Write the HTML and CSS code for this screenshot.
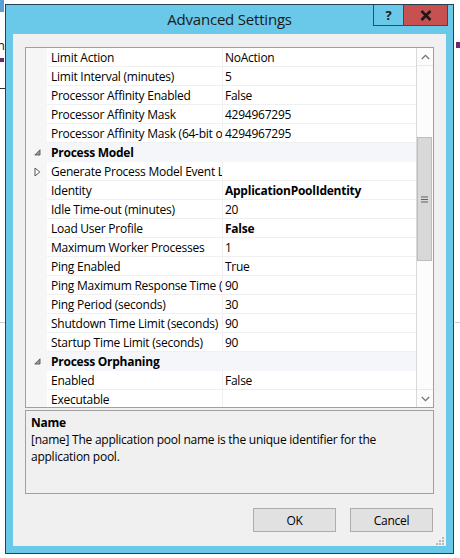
FILE: index.html
```html
<!DOCTYPE html>
<html>
<head>
<meta charset="utf-8">
<title>Advanced Settings</title>
<link rel="stylesheet" href="styles.css">
</head>
<body>
<div class="backdrop">
  <span class="bd-sel"></span>
  <span class="bd-top">Pools</span>
  <span class="bd-left-n">n</span>
  <span class="bd-left-c"></span>
  <span class="bd-left-dash"></span>
  <span class="bd-right-h"></span>
  <span class="bd-line-l"></span>
  <span class="bd-line-r"></span>
</div>

<div class="dialog">
  <div class="titlebar">
    <span class="title">Advanced Settings</span>
    <div class="caption-buttons">
      <div class="cap help">?</div>
      <div class="cap close">
        <svg width="12" height="11" viewBox="0 0 12 11"><path d="M1.5 1 L10.5 10 M10.5 1 L1.5 10" stroke="#1a1a1a" stroke-width="2.6" fill="none"/></svg>
      </div>
    </div>
  </div>

  <div class="client">
    <div class="grid">
      <div class="rows">
        <div class="row"><span class="margin"></span><span class="name">Limit Action</span><span class="value">NoAction</span></div>
        <div class="row"><span class="margin"></span><span class="name">Limit Interval (minutes)</span><span class="value">5</span></div>
        <div class="row"><span class="margin"></span><span class="name">Processor Affinity Enabled</span><span class="value">False</span></div>
        <div class="row"><span class="margin"></span><span class="name">Processor Affinity Mask</span><span class="value">4294967295</span></div>
        <div class="row"><span class="margin"></span><span class="name">Processor Affinity Mask (64-bit option)</span><span class="value">4294967295</span></div>
        <div class="row category"><span class="margin"><svg class="glyph" width="7" height="7" viewBox="0 0 7 7"><path d="M6 0.8 L6 6 L0.8 6 Z" fill="#9a9a9a" stroke="#555" stroke-width="0.9"/></svg></span><span class="cat-name">Process Model</span></div>
        <div class="row"><span class="margin"><svg class="glyph" width="7" height="10" viewBox="0 0 7 10"><path d="M1 1 L5.8 5 L1 9 Z" fill="#fff" stroke="#555" stroke-width="1"/></svg></span><span class="name">Generate Process Model Event Log Entry</span><span class="value"></span></div>
        <div class="row"><span class="margin"></span><span class="name">Identity</span><span class="value bold">ApplicationPoolIdentity</span></div>
        <div class="row"><span class="margin"></span><span class="name">Idle Time-out (minutes)</span><span class="value">20</span></div>
        <div class="row"><span class="margin"></span><span class="name">Load User Profile</span><span class="value bold">False</span></div>
        <div class="row"><span class="margin"></span><span class="name">Maximum Worker Processes</span><span class="value">1</span></div>
        <div class="row"><span class="margin"></span><span class="name">Ping Enabled</span><span class="value">True</span></div>
        <div class="row"><span class="margin"></span><span class="name">Ping Maximum Response Time (seconds)</span><span class="value">90</span></div>
        <div class="row"><span class="margin"></span><span class="name">Ping Period (seconds)</span><span class="value">30</span></div>
        <div class="row"><span class="margin"></span><span class="name">Shutdown Time Limit (seconds)</span><span class="value">90</span></div>
        <div class="row"><span class="margin"></span><span class="name">Startup Time Limit (seconds)</span><span class="value">90</span></div>
        <div class="row category"><span class="margin"><svg class="glyph" width="7" height="7" viewBox="0 0 7 7"><path d="M6 0.8 L6 6 L0.8 6 Z" fill="#9a9a9a" stroke="#555" stroke-width="0.9"/></svg></span><span class="cat-name">Process Orphaning</span></div>
        <div class="row"><span class="margin"></span><span class="name">Enabled</span><span class="value">False</span></div>
        <div class="row"><span class="margin"></span><span class="name">Executable</span><span class="value"></span></div>
      </div>
      <div class="scrollbar">
        <div class="sb-btn">
          <svg width="9" height="6" viewBox="0 0 9 6"><path d="M0.8 5 L4.5 1.3 L8.2 5" stroke="#707070" stroke-width="1.2" fill="none"/></svg>
        </div>
        <div class="sb-track">
          <div class="thumb">
            <svg width="7" height="7" viewBox="0 0 7 7"><path d="M0 1 H7 M0 3.5 H7 M0 6 H7" stroke="#606060" stroke-width="1"/></svg>
          </div>
        </div>
        <div class="sb-btn">
          <svg width="9" height="6" viewBox="0 0 9 6"><path d="M0.8 1 L4.5 4.7 L8.2 1" stroke="#707070" stroke-width="1.2" fill="none"/></svg>
        </div>
      </div>
    </div>

    <div class="desc">
      <div class="desc-title">Name</div>
      <div class="desc-text">[name] The application pool name is the unique identifier for the<br>application pool.</div>
    </div>

    <div class="actions">
      <div class="btn">OK</div>
      <div class="btn">Cancel</div>
    </div>

    <svg class="grip" width="8" height="8" viewBox="0 0 8 8">
      <g fill="#b8b8b8">
        <rect x="6" y="0" width="2" height="2"/>
        <rect x="3" y="3" width="2" height="2"/><rect x="6" y="3" width="2" height="2"/>
        <rect x="0" y="6" width="2" height="2"/><rect x="3" y="6" width="2" height="2"/><rect x="6" y="6" width="2" height="2"/>
      </g>
    </svg>
  </div>
</div>
</body>
</html>
```

FILE: styles.css
```css
* { box-sizing: border-box; }

html, body {
  margin: 0;
  padding: 0;
  width: 460px;
  height: 558px;
  overflow: hidden;
  background: #ffffff;
  font-family: "Open Sans", "Noto Sans", "DejaVu Sans", sans-serif;
  font-size: 12px;
  color: #000;
}

body { position: relative; }

/* fragments of the window behind the dialog */
.backdrop { position: absolute; inset: 0; }
.bd-sel { position: absolute; left: 0; top: 0; width: 4px; height: 12px; background: #5c9fd6; }
.bd-top { position: absolute; left: 30px; top: -15px; font-size: 14px; line-height: 19px; color: #222; }
.bd-left-n { position: absolute; left: -3px; top: 36px; font-size: 13px; color: #222; }
.bd-left-c { position: absolute; left: 0; top: 58px; width: 4px; height: 4px; background: #6b2a6b; }
.bd-left-dash { position: absolute; left: 0; top: 88px; width: 5px; height: 1px; background: #333; }
.bd-right-h { position: absolute; left: 456px; top: 42px; width: 4px; height: 6px; background: #6b2a6b; }
.bd-line-l { position: absolute; left: 0; top: 322px; width: 5px; height: 1px; background: #cfcfcf; }
.bd-line-r { position: absolute; left: 455px; top: 322px; width: 5px; height: 1px; background: #cfcfcf; }

/* dialog frame */
.dialog {
  position: relative;
  margin: 4px 0 0 5px;
  width: 449px;
  height: 550px;
  border: 1px solid #25404f;
  background: #6ac8e8;
  padding: 0 7px 7px 7px;
  display: flex;
  flex-direction: column;
}

.titlebar {
  position: relative;
  height: 29px;
  display: flex;
  align-items: center;
  justify-content: center;
}

.title {
  font-size: 15px;
  color: #1b1b1b;
  letter-spacing: -0.2px;
  margin-top: -1px;
}

.caption-buttons {
  position: absolute;
  top: 0;
  right: -2px;
  display: flex;
}

.cap {
  height: 21px;
  display: flex;
  align-items: center;
  justify-content: center;
  border: 1px solid #2f4f60;
  border-top: none;
}

.help {
  width: 30px;
  font-weight: 700;
  font-size: 13px;
  color: #1a1a1a;
  border-right: none;
}

.close {
  width: 45px;
  background: #c75050;
}

/* client area */
.client {
  position: relative;
  flex: 1;
  background: #f0f0f0;
  padding: 13px 12px 0 12px;
  display: flex;
  flex-direction: column;
  letter-spacing: -0.25px;
}

.grid {
  height: 361px;
  border: 1px solid #a0a0a0;
  background: #fff;
  display: flex;
}

.rows {
  flex: 1;
  overflow: hidden;
}

.row {
  display: flex;
  height: 19px;
  line-height: 17px;
}

.margin {
  width: 21px;
  flex: none;
  background: #f6f6f6;
  display: flex;
  align-items: center;
  justify-content: center;
}

.glyph { margin-left: 1px; }

.name {
  width: 176px;
  flex: none;
  padding: 1px 0 0 4px;
  border-right: 1px solid #f0f0f0;
  border-bottom: 1px solid #f0f0f0;
  white-space: nowrap;
  overflow: hidden;
}

.value {
  flex: 1;
  padding: 1px 0 0 2px;
  border-bottom: 1px solid #f0f0f0;
  white-space: nowrap;
  overflow: hidden;
}

.bold { font-weight: 700; }

.category { background: #f5f6f9; }
.category .cat-name {
  flex: 1;
  padding: 1px 0 0 4px;
  font-weight: 700;
  white-space: nowrap;
}

/* scrollbar */
.scrollbar {
  width: 17px;
  flex: none;
  border-left: 1px solid #d9d9d9;
  background: #fcfcfc;
  display: flex;
  flex-direction: column;
}

.sb-btn {
  height: 18px;
  flex: none;
  display: flex;
  align-items: center;
  justify-content: center;
  border-bottom: 1px solid #e8e8e8;
}
.sb-btn:last-child {
  border-bottom: none;
  border-top: 1px solid #e8e8e8;
}

.sb-track {
  flex: 1;
  padding-top: 71px;
}

.thumb {
  height: 124px;
  margin: 0 1px 0 0;
  background: #d8d8d8;
  border: 1px solid #bdbdbd;
  display: flex;
  align-items: center;
  justify-content: center;
}

/* description */
.desc {
  margin-top: 2px;
  height: 84px;
  border: 1px solid #a0a0a0;
  padding: 3px 5px;
  line-height: 17px;
}

.desc-title { font-weight: 700; }

/* buttons */
.actions {
  margin-top: 14px;
  display: flex;
  justify-content: flex-end;
  gap: 14px;
  padding-right: 1px;
}

.btn {
  width: 83px;
  height: 24px;
  border: 1px solid #adadad;
  background: #e1e1e1;
  display: flex;
  align-items: center;
  justify-content: center;
}

.grip {
  position: absolute;
  right: 2px;
  bottom: 1px;
}
```
